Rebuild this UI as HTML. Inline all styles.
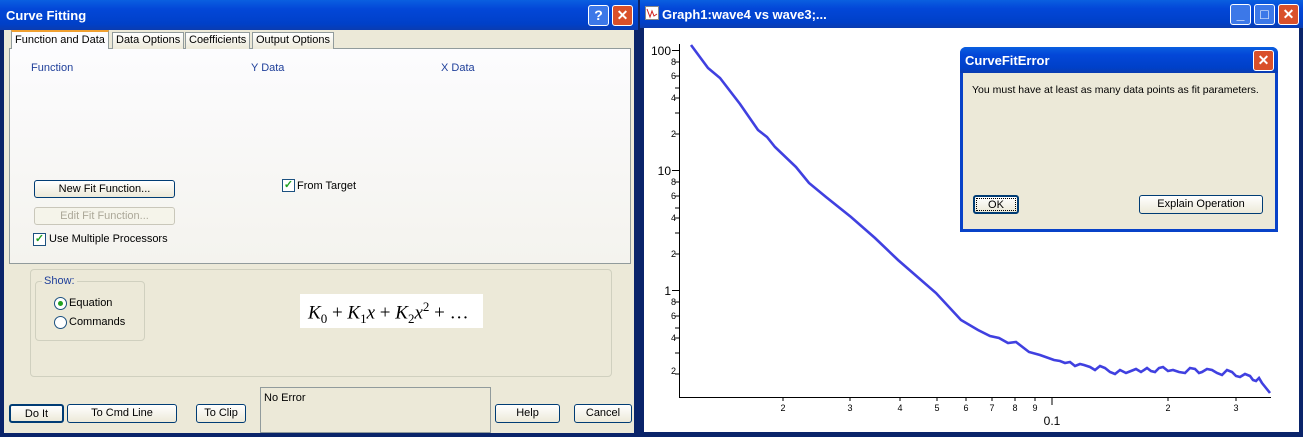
<!DOCTYPE html>
<html><head><style>
*{box-sizing:border-box;margin:0;padding:0}
body{width:1303px;height:437px;position:relative;overflow:hidden;background:#0a246a;font-family:"Liberation Sans",sans-serif;font-size:11px;color:#000}
.abs{position:absolute}
.title{background:linear-gradient(#0a5fe0,#0347d8 30%,#0040c8 80%,#0a3cb0);color:#fff;font-weight:bold;font-size:13px}
.btn{position:absolute;border:1px solid #003c74;border-radius:3px;background:linear-gradient(#fff,#ece9d8);text-align:center;font-size:11px;line-height:16px}
.cb{position:absolute;width:13px;height:13px;border:1px solid #1c5180;background:#fff;color:#21a121;font-size:11px;line-height:11px;text-align:center;font-weight:bold}
.lbl{position:absolute;font-size:11px}
.tab{position:absolute;top:32px;height:17px;border:1px solid #919b9c;border-bottom:none;background:linear-gradient(#fff,#ece9d8);font-size:11px;line-height:15px;padding:0 3px}
.xb{position:absolute;width:21px;height:21px;border:1px solid #fff;border-radius:3px;color:#fff;font-weight:bold;text-align:center;line-height:19px;font-size:14px}
</style></head><body>
<div class="abs title" style="left:0;top:0;width:638px;height:30px;padding:8px 0 0 6px">Curve Fitting</div>
<div class="xb" style="left:588px;top:5px;background:#3c78e8">?</div>
<div class="xb" style="left:612px;top:5px;background:#d9502a">✕</div>
<div class="abs" style="left:4px;top:30px;width:630px;height:403px;background:#ece9d8"></div>
<div class="abs" style="left:9px;top:48px;width:622px;height:216px;border:1px solid #919b9c;background:linear-gradient(#fcfcfe,#f4f3ee)"></div>
<div class="tab" style="left:11px;top:30px;height:19px;background:#fcfcfe;border-top:2px solid #f0a030;line-height:16px">Function and Data</div>
<div class="tab" style="left:112px">Data Options</div>
<div class="tab" style="left:185px">Coefficients</div>
<div class="tab" style="left:252px">Output Options</div>
<div class="lbl" style="left:31px;top:62px;color:#1f3f9a">Function</div>
<div class="lbl" style="left:251px;top:62px;color:#1f3f9a">Y Data</div>
<div class="lbl" style="left:441px;top:62px;color:#1f3f9a">X Data</div>
<div class="btn" style="left:34px;top:180px;width:141px;height:18px">New Fit Function...</div>
<div class="btn" style="left:34px;top:207px;width:141px;height:18px;color:#aca899;border-color:#c9c7ba;background:#f5f4ea">Edit Fit Function...</div>
<div class="cb" style="left:33px;top:233px">✓</div><div class="lbl" style="left:49px;top:233px">Use Multiple Processors</div>
<div class="cb" style="left:282px;top:179px">✓</div><div class="lbl" style="left:297px;top:180px">From Target</div>
<div class="abs" style="left:30px;top:269px;width:582px;height:108px;border:1px solid #d0d0bf;border-radius:4px"></div>
<div class="abs" style="left:35px;top:281px;width:110px;height:60px;border:1px solid #d0d0bf;border-radius:4px"></div>
<div class="lbl" style="left:42px;top:275px;background:#ece9d8;color:#1f3f9a;padding:0 2px">Show:</div>
<div class="abs" style="left:54px;top:297px;width:13px;height:13px;border:1px solid #1c5180;border-radius:50%;background:#fff"><div class="abs" style="left:3px;top:3px;width:5px;height:5px;border-radius:50%;background:#21a121"></div></div>
<div class="lbl" style="left:69px;top:297px">Equation</div>
<div class="abs" style="left:54px;top:316px;width:13px;height:13px;border:1px solid #1c5180;border-radius:50%;background:#fff"></div>
<div class="lbl" style="left:69px;top:316px">Commands</div>
<div class="abs" style="left:300px;top:294px;width:183px;height:34px;background:#fff;font-family:'Liberation Serif',serif;font-size:19px;padding:5px 0 0 8px;white-space:nowrap"><i>K</i><sub style="font-size:13px">0</sub> + <i>K</i><sub style="font-size:13px">1</sub><i>x</i> + <i>K</i><sub style="font-size:13px">2</sub><i>x</i><sup style="font-size:13px">2</sup> + …</div>
<div class="btn" style="left:9px;top:404px;width:55px;height:19px;border-width:2px">Do It</div>
<div class="btn" style="left:67px;top:404px;width:110px;height:19px">To Cmd Line</div>
<div class="btn" style="left:196px;top:404px;width:50px;height:19px">To Clip</div>
<div class="abs" style="left:260px;top:387px;width:231px;height:46px;border:1px solid #919b9c;padding:4px 3px">No Error</div>
<div class="btn" style="left:495px;top:404px;width:65px;height:19px">Help</div>
<div class="btn" style="left:574px;top:404px;width:58px;height:19px">Cancel</div>
<div class="abs title" style="left:640px;top:0;width:663px;height:28px;padding:7px 0 0 22px">Graph1:wave4 vs wave3;...</div>
<div class="abs" style="left:645px;top:6px;width:14px;height:14px;background:#fff;border:1px solid #888"><svg width="12" height="12"><path d="M1 2 L4 10 L6 4 L8 9 L11 7" stroke="#d02020" fill="none"/></svg></div>
<div class="xb" style="left:1230px;top:4px;background:#3c78e8">_</div>
<div class="xb" style="left:1254px;top:4px;background:#3c78e8">□</div>
<div class="xb" style="left:1278px;top:4px;background:#d9502a">✕</div>
<div class="abs" style="left:644px;top:28px;width:655px;height:404px;background:#fff"></div>
<svg class="abs" style="left:0;top:0" width="1303" height="437" font-family="Liberation Sans" font-size="9">
<g stroke="#000" stroke-width="1">
<line x1="679.5" y1="44" x2="679.5" y2="397"/>
<line x1="679" y1="397.5" x2="1271" y2="397.5"/>
<line x1="672" y1="50.5" x2="679" y2="50.5"/><line x1="672" y1="170.5" x2="679" y2="170.5"/><line x1="672" y1="290.5" x2="679" y2="290.5"/>
<path d="M675 62h4M675 76h4M675 98h4M675 134h4M675 88h4M675 113h4M675 182h4M675 196h4M675 218h4M675 254h4M675 208h4M675 233h4M675 302h4M675 316h4M675 338h4M675 374h4M675 328h4M675 353h4"/>
<path d="M783 397v4M850 397v4M900 397v4M937 397v4M966 397v4M992 397v4M1015 397v4M1035 397v4M1052 397v8M1168 397v4M1236 397v4"/>
</g>
<g text-anchor="end">
<text x="671" y="55" font-size="12">100</text><text x="671" y="175" font-size="12">10</text><text x="671" y="295" font-size="12">1</text>
<text x="676" y="65">8</text><text x="676" y="79">6</text><text x="676" y="101">4</text><text x="676" y="137">2</text>
<text x="676" y="185">8</text><text x="676" y="199">6</text><text x="676" y="221">4</text><text x="676" y="257">2</text>
<text x="676" y="305">8</text><text x="676" y="319">6</text><text x="676" y="341">4</text><text x="676" y="374">2</text>
</g>
<g text-anchor="middle">
<text x="783" y="411">2</text><text x="850" y="411">3</text><text x="900" y="411">4</text><text x="937" y="411">5</text><text x="966" y="411">6</text><text x="992" y="411">7</text><text x="1015" y="411">8</text><text x="1035" y="411">9</text><text x="1168" y="411">2</text><text x="1236" y="411">3</text>
<text x="1052" y="425" font-size="12">0.1</text>
</g>
<polyline fill="none" stroke="#4040e0" stroke-width="2.6" points="691,45 708,68 720,78 740,104 758,130 767,137 775,147 796,167 809,183 826,197 851,217 875,238 898,260 936,293 961,320 978,330 990,336 999,338 1008,343 1016,342 1029,352 1040,355 1054,360 1060,361 1065,363 1070,362 1075,366 1080,364 1084,365 1090,367 1095,370 1100,366 1105,368 1110,372 1115,374 1120,370 1126,373 1131,371 1136,369 1141,372 1147,368 1151,371 1155,372 1159,368 1163,367 1168,371 1173,370 1179,372 1185,373 1190,368 1195,369 1199,373 1202,372 1207,369 1212,370 1217,373 1222,375 1227,370 1232,372 1236,376 1240,377 1245,374 1250,376 1253,380 1256,381 1259,378 1262,383 1266,388 1270,393"/>
</svg>
<div class="abs" style="left:960px;top:47px;width:318px;height:185px;background:#0842c8;border-radius:6px 6px 0 0"></div>
<div class="abs title" style="left:960px;top:47px;width:318px;height:26px;padding:6px 0 0 5px;border-radius:6px 6px 0 0">CurveFitError</div>
<div class="xb" style="left:1253px;top:50px;background:#d9502a">✕</div>
<div class="abs" style="left:963px;top:73px;width:312px;height:156px;background:#ece9d8"></div>
<div class="lbl" style="left:972px;top:84px;font-size:10.5px">You must have at least as many data points as fit parameters.</div>
<div class="btn" style="left:973px;top:195px;width:46px;height:19px;border-width:2px;outline:1px dotted #000;outline-offset:-4px">OK</div>
<div class="btn" style="left:1139px;top:195px;width:124px;height:19px">Explain Operation</div>
</body></html>
